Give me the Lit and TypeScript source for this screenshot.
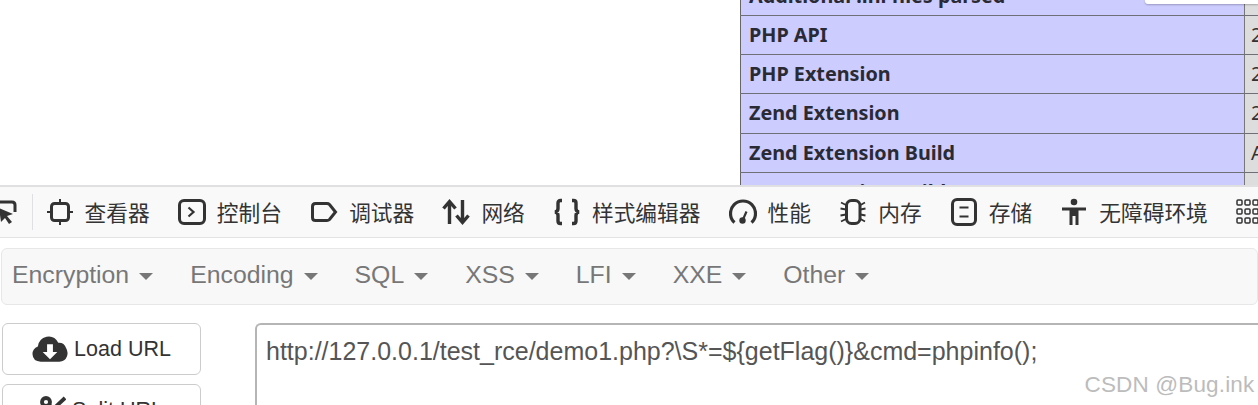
import { LitElement, html, css, svg } from "lit";
import { customElement } from "lit/decorators.js";

const icons: Record<string, unknown> = {
  inspector: svg`<svg class="ic" width="28" height="28" viewBox="0 0 28 28" fill="none" stroke="#333" stroke-width="3"><rect x="5.500" y="5.500" width="17" height="17" rx="3"/><path d="M14 1v4M14 23v4M1 14h4.500M22.500 14H27" stroke-width="2"/></svg>`,
  console: svg`<svg class="ic" width="28" height="28" viewBox="0 0 28 28" fill="none" stroke="#333" stroke-width="3"><rect x="1.500" y="2.500" width="25" height="23" rx="4.500"/><path d="M10.500 9.500l5 4.500-5 4.500" stroke-width="2.200"/></svg>`,
  debugger: svg`<svg class="ic" width="28" height="28" viewBox="0 0 28 28" fill="none" stroke="#333" stroke-width="3"><path d="M5.500 5.500h11.500q1.500 0 2.500 1l6 7.500-6 7.500q-1 1-2.500 1H5.500q-3 0-3-3V8.500q0-3 3-3z"/></svg>`,
  network: svg`<svg class="ic" width="28" height="28" viewBox="0 0 28 28" fill="none" stroke="#333" stroke-width="3.400"><path d="M7.500 26V4M1.500 10.500L7.500 3.500l6 7M20.500 2v22M14.500 17.500l6 7 6-7"/></svg>`,
  style: svg`<svg class="ic" width="28" height="28" viewBox="0 0 28 28" fill="none" stroke="#333" stroke-width="3.400"><path d="M9 2.500H7.500Q5 2.500 5 5v5.500q0 3-3 3.500 3 .5 3 3.500V23q0 2.500 2.500 2.500H9M19 2.500h1.500Q23 2.500 23 5v5.500q0 3 3 3.500-3 .5-3 3.500V23q0 2.500-2.500 2.500H19"/></svg>`,
  perf: svg`<svg class="ic" width="28" height="28" viewBox="0 0 28 28" fill="none" stroke="#333" stroke-width="3.200"><path d="M5.500 24.500C2.500 22 1.500 18.500 1.500 15.500 1.500 8.500 7 3 14 3s12.500 5.500 12.500 12.500c0 3-1 6.500-4 9"/><circle cx="13.500" cy="22.500" r="3.200" fill="#333" stroke="none"/><path d="M14 21.500l3.500-8" stroke-width="2.200"/></svg>`,
  memory: svg`<svg class="ic" width="28" height="28" viewBox="0 0 28 28" fill="none" stroke="#333" stroke-width="3"><rect x="7.500" y="2.500" width="13.500" height="23" rx="5"/><path d="M7 7L2 4.500M7 11.500L1.500 10.500M7 16.500L1.500 17.500M7 21L2 23.500M21.500 7l4.500-2.500M21.500 11.500l5-1M21.500 16.500l5 1M21.500 21l4.500 2.500" stroke-width="1.800"/></svg>`,
  storage: svg`<svg class="ic" width="28" height="28" viewBox="0 0 28 28" fill="none" stroke="#333" stroke-width="3"><rect x="2.500" y="1.500" width="23" height="25" rx="4.500"/><path d="M9.500 9.500h9M9.500 18.500h9" stroke-width="2.200"/></svg>`,
  a11y: svg`<svg class="ic" width="28" height="28" viewBox="0 0 28 28" fill="#333"><circle cx="14" cy="4" r="3.300"/><path d="M2 9.500h24v3h-7.500V27h-3v-9h-3v9h-3V12.500H2z"/></svg>`,
};

const grid = svg`<svg class="grid" width="24" height="28" viewBox="0 0 24 28" fill="none" stroke="#333" stroke-width="1.500"><rect x="1" y="2" width="5" height="5" rx="1"/><rect x="9" y="2" width="5" height="5" rx="1"/><rect x="17" y="2" width="5" height="5" rx="1"/><rect x="1" y="11" width="5" height="5" rx="1"/><rect x="9" y="11" width="5" height="5" rx="1"/><rect x="17" y="11" width="5" height="5" rx="1"/><rect x="1" y="20" width="5" height="5" rx="1"/><rect x="9" y="20" width="5" height="5" rx="1"/><rect x="17" y="20" width="5" height="5" rx="1"/></svg>`;

const tabs = [
  ["inspector", "查看器"], ["console", "控制台"], ["debugger", "调试器"], ["network", "网络"],
  ["style", "样式编辑器"], ["perf", "性能"], ["memory", "内存"], ["storage", "存储"], ["a11y", "无障碍环境"],
];
const menu = ["Encryption", "Encoding", "SQL", "XSS", "LFI", "XXE", "Other"];
const rows = ["Additional .ini files parsed", "PHP API", "PHP Extension", "Zend Extension", "Zend Extension Build", "PHP Extension Build"];
const vals = ["", "2", "2", "2", "A", ""];

@customElement("app-root")
export class AppRoot extends LitElement {
  static styles = css`
    :host { display: block; width: 1258px; height: 405px; overflow: hidden; position: relative; background: #fff; font-family: "Liberation Sans", sans-serif; }
    .top { height: 185px; overflow: hidden; display: flex; justify-content: flex-end; position: relative; }
    .table { width: 518px; margin-top: -23.500px; flex: none; }
    .row { display: flex; height: 39.3px; box-sizing: border-box; border-bottom: 1px solid #6f6f78; }
    .key { width: 505px; flex: none; box-sizing: border-box; background: #ccf; border-left: 1.500px solid #666; border-right: 1.500px solid #777; padding-left: 8px; font: 700 19.800px/38px "Noto Sans", sans-serif; color: #2a2a35; white-space: nowrap; overflow: hidden; }
    .val { flex: 1; background: #ddd; padding-left: 6px; font: 20px/38px "Noto Sans", sans-serif; color: #333; overflow: hidden; }
    .popup { position: absolute; left: 1145px; top: 0; width: 113px; height: 4px; background: #fff; border-radius: 0 0 0 3px; box-shadow: 0 1px 2px rgba(0,0,0,.25); }
    .tabs { height: 53px; box-sizing: border-box; background: #f9f9fa; border-top: 2px solid #e0e0e2; border-bottom: 1.500px solid #e3e3e5; display: flex; align-items: center; gap: 28.200px; padding-bottom: 1px; overflow: hidden; }
    .pick { flex: none; margin-left: -5px; width: 24px; height: 28px; }
    .sep { flex: none; width: 1px; height: 36px; background: #e0e0e2; margin: 0 -15.400px 0 -15.400px; }
    .tab { display: flex; flex: none; align-items: center; gap: 11px; font: 21.700px/1 "Noto Sans CJK SC", sans-serif; color: #333; }
    .ic, .grid { flex: none; }
    .nav { margin: 10px 0 0 1px; height: 57px; box-sizing: border-box; background: #f8f8f8; border: 1px solid #e7e7e7; border-radius: 6px; display: flex; align-items: center; padding: 0 0 4px 10px; gap: 37px; }
    .menu { display: flex; align-items: center; gap: 10px; font-size: 24.800px; color: #777; }
    .caret { width: 0; height: 0; border-top: 7px solid #777; border-left: 7.200px solid transparent; border-right: 7.200px solid transparent; margin-top: 3px; }
    .body { display: flex; margin: 18px 0 0 2px; gap: 54px; }
    .buttons { width: 199px; flex: none; display: flex; flex-direction: column; gap: 9px; }
    .btn { height: 52px; box-sizing: border-box; background: #fff; border: 1px solid #ccc; border-radius: 6px; display: flex; align-items: center; justify-content: center; gap: 6px; font-size: 21.500px; color: #333; }
    .input { flex: 1; height: 200px; box-sizing: border-box; border: 2px solid #b5b5b5; border-radius: 6px 0 0 0; border-right: 0; padding: 10px 0 0 9px; font-size: 25px; line-height: 32px; color: #555; white-space: nowrap; }
    .mark { position: absolute; left: 1084.500px; top: 371px; font: 22.500px/28px "Liberation Sans", sans-serif; letter-spacing: .15px; color: #bcbcbc; white-space: nowrap; }
  `;

  render() {
    return html`
      <div class="top">
        <div class="table">
          ${rows.map((r, i) => html`<div class="row"><div class="key">${r}</div><div class="val">${vals[i]}</div></div>`)}
        </div>
        <div class="popup"></div>
      </div>
      <div class="tabs">
        <svg class="pick" viewBox="0 0 24 28" fill="none"><path d="M1 4h16q3 0 3 3v7" stroke="#333" stroke-width="3"/><path d="M4 10l14 6-6 2 5 6-3 2-4-6-4 4z" fill="#333"/></svg>
        <div class="sep"></div>
        ${tabs.map(([i, t]) => html`<div class="tab">${icons[i]}<span>${t}</span></div>`)}
        ${grid}
      </div>
      <div class="nav">
        ${menu.map((m) => html`<div class="menu"><span>${m}</span><i class="caret"></i></div>`)}
      </div>
      <div class="body">
        <div class="buttons">
          <div class="btn">
            <svg width="36" height="28" viewBox="0 0 37 28"><path d="M9 27Q1 27 0.500 19.500 0.500 13.500 6 11.500 7 3.500 15 1.500 23 0 27 7.500 33 7 35 13 37.500 17 36 21.500 34 27 28 27z" fill="#333"/><path d="M15.500 9h6v8h4.500l-7.500 7.500L11 17h4.500z" fill="#fff"/></svg>
            <span>Load URL</span>
          </div>
          <div class="btn">
            <svg width="26" height="28" viewBox="0 0 26 28" fill="none" stroke="#333" stroke-width="3.800"><circle cx="6" cy="6" r="4"/><circle cx="6" cy="21" r="4"/><path d="M9 9l16 12M9 17L25 2"/></svg>
            <span>Split URL</span>
          </div>
        </div>
        <div class="input">http://127.0.0.1/test_rce/demo1.php?\\S*=\${getFlag()}&cmd=phpinfo();</div>
      </div>
      <div class="mark">CSDN @Bug.ink</div>
    `;
  }
}
